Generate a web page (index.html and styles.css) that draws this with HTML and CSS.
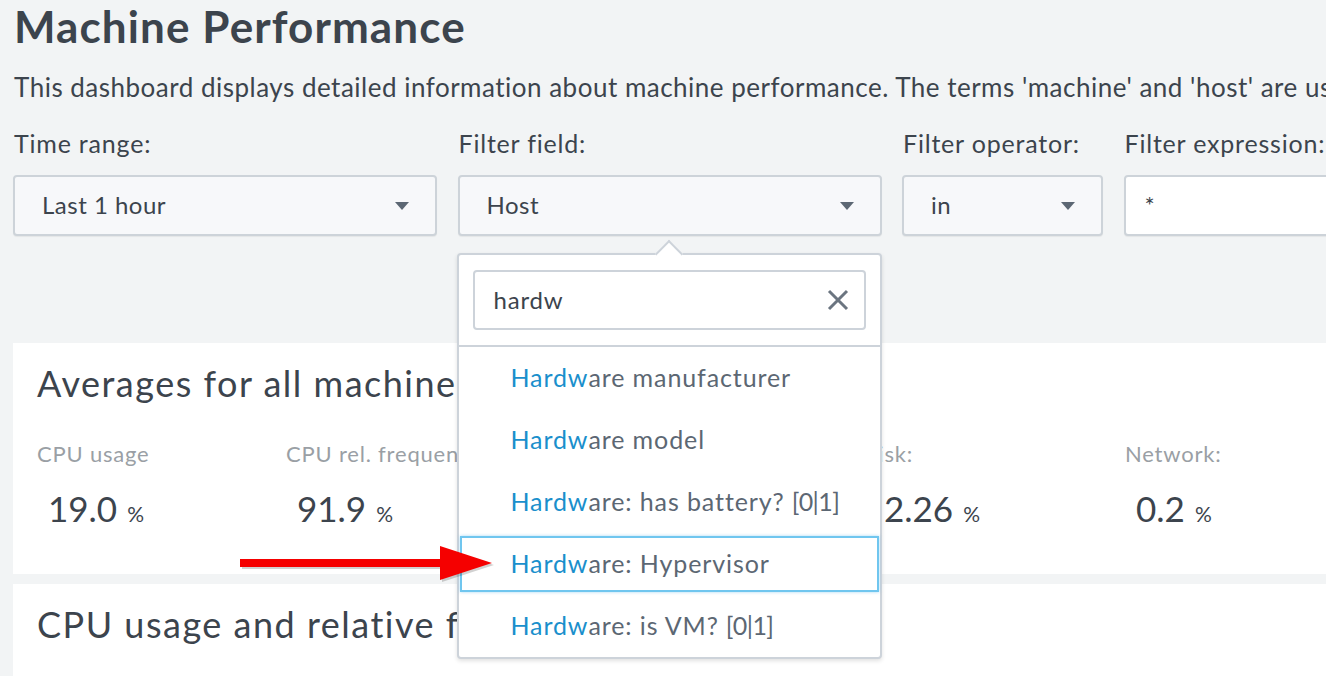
FILE: index.html
```html
<!doctype html>
<html>
<head>
<meta charset="utf-8">
<title>Machine Performance</title>
<link rel="stylesheet" href="styles.css">
</head>

<body>
<div class="page">
    <h1 class="dashTitle">Machine Performance</h1>
    <p class="dashDesc">This dashboard displays detailed information about machine performance. The terms 'machine' and 'host' are used interchangeably.</p>

    <div class="fieldset">
        <div class="field fieldWide">
            <label>Time range:</label>
            <div class="selectBox"><span>Last 1 hour</span><i class="caret"></i></div>
        </div>
        <div class="field fieldWide">
            <label>Filter field:</label>
            <div class="selectBox"><span>Host</span><i class="caret"></i></div>

            <div class="popover">
                <div class="searchWrap">
                    <div class="searchBox">
                        <span>hardw</span>
                        <svg class="clearIcon" width="22" height="22" viewBox="0 0 22 22">
                            <path d="M2 2 L20 20 M20 2 L2 20" stroke="#6b7580" stroke-width="3" stroke-linecap="butt" fill="none"/>
                        </svg>
                    </div>
                </div>
                <ul class="menu">
                    <li><em>Hardw</em>are manufacturer</li>
                    <li><em>Hardw</em>are model</li>
                    <li><em>Hardw</em>are: has battery? <b>[0|1]</b></li>
                    <li class="active"><em>Hardw</em>are: Hypervisor</li>
                    <li><em>Hardw</em>are: is VM? <b>[0|1]</b></li>
                </ul>
            </div>
        </div>
        <div class="field fieldNarrow">
            <label>Filter operator:</label>
            <div class="selectBox"><span>in</span><i class="caret"></i></div>
        </div>
        <div class="field fieldWide">
            <label>Filter expression:</label>
            <div class="textBox"><span>*</span></div>
        </div>
    </div>

    <div class="dashRow">
        <div class="panel">
            <h2 class="panelTitle">Averages for all machines</h2>
            <div class="singles">
                <div class="single">
                    <span class="singleLabel">CPU usage</span>
                    <div class="singleValue"><span class="num">19.0</span><span class="unit">%</span></div>
                </div>
                <div class="single">
                    <span class="singleLabel">CPU rel. frequency</span>
                    <div class="singleValue"><span class="num">91.9</span><span class="unit">%</span></div>
                </div>
                <div class="single">
                    <span class="singleLabel">Disk:</span>
                    <div class="singleValue shifted"><span class="num">2.26</span><span class="unit">%</span></div>
                </div>
                <div class="single">
                    <span class="singleLabel">Network:</span>
                    <div class="singleValue"><span class="num">0.2</span><span class="unit">%</span></div>
                </div>
            </div>
        </div>
    </div>

    <div class="dashRow">
        <div class="panel panelTall">
            <h2 class="panelTitle">CPU usage and relative frequency</h2>
        </div>
    </div>
</div>

<!-- annotation arrow over the screenshot -->
<svg class="callout" width="262" height="44" viewBox="236 542 262 44">
    <rect x="242" y="561" width="202" height="8" fill="rgba(0,0,0,0.18)"/>
    <polygon points="442,548 494,565 442,582" fill="rgba(0,0,0,0.18)"/>
    <rect x="240" y="559" width="202" height="8" fill="#f50000"/>
    <polygon points="440,546 492,563 440,580" fill="#f50000"/>
</svg>
</body>
</html>
```

FILE: styles.css
```css
*{ margin:0; padding:0; box-sizing:border-box}
ul{ list-style:none}
em{ font-style:normal}
html,body{ width:1326px; height:676px; overflow:hidden}
body{ background:#f2f4f5; color:#3c444d; font-family:"Lato","Liberation Sans",sans-serif; position:relative}

.page{ padding:0 0 0 13px}
.dashTitle{ font-size:44px; line-height:52px; font-weight:700; padding-left:1px; letter-spacing:1.1px}
.dashDesc{ font-size:26px; line-height:30px; margin-top:20px; padding-left:1px; white-space:nowrap; letter-spacing:0.5px}

.fieldset{ display:flex; gap:20.5px; margin-top:26px; width:2000px}
.field{ position:relative; flex-shrink:0}
.fieldWide{ width:424px}
.fieldNarrow{ width:201px}
.field label{ display:block; font-size:25px; line-height:30px; padding-left:1px; margin-bottom:17px; letter-spacing:0.8px}

.selectBox,.textBox{ height:61px; border:2px solid #cdd3d9; border-radius:4px; background:#f7f8fa; display:flex; align-items:center; padding:0 26px 3px 27px; font-size:24px; letter-spacing:0.5px; box-shadow:0 1px 1px rgba(0,0,0,0.06)}
.selectBox span{ flex:1}
.caret{ width:0; height:0; border-left:7px solid transparent; border-right:7px solid transparent; border-top:8px solid #5c6773; margin-top:3px}
.textBox{ background:#fff; padding-left:19px}

.popover{ position:absolute; left:-1px; top:calc(100% + 17px); width:425px; background:#fff; border:2px solid #cdd3da; border-radius:4px; box-shadow:0 2px 4px rgba(0,0,0,0.12); z-index:5}
.popover:before{ content:""; position:absolute; left:200px; top:-11px; width:18px; height:18px; background:#fff; border-top:2px solid #cdd3da; border-left:2px solid #cdd3da; transform:rotate(45deg)}
.searchWrap{ position:relative; padding:15px 14px; border-bottom:2px solid #cdd3da}
.searchBox{ height:60px; border:2px solid #cdd3da; border-radius:4px; display:flex; align-items:center; padding:0 15px 2px 19px; font-size:24px; letter-spacing:0.8px}
.searchBox span{ flex:1}
.clearIcon{ margin-top:2px}
.menu{ display:flex; flex-direction:column; gap:6px; padding:3px 1px}
.menu li{ height:56px; border:2px solid transparent; display:flex; align-items:center; padding:0 0 2px 49px; font-size:25px; color:#5c6773; letter-spacing:0.9px; white-space:nowrap}
.menu li em{ color:#1a8fcc}
.menu li b{ font-weight:400; letter-spacing:-0.6px; margin-left:7px}
.menu li.active{ border-color:#70c6ef; box-shadow:0 0 3px rgba(80,180,240,0.5)}

.dashRow{ margin-top:10px}
.fieldset + .dashRow{ margin-top:107px}
.panel{ background:#fff; padding:20px 0 45px 24px; height:231px}
.panelTall{ height:200px}
.panelTitle{ font-size:36px; line-height:40px; font-weight:400; white-space:nowrap; letter-spacing:1.5px}

.singles{ display:grid; grid-template-columns:249px 575px 264px 1fr; margin-top:37px}
.singleLabel{ display:block; font-size:22px; line-height:28px; color:#9a9fa5; white-space:nowrap; letter-spacing:0.8px}
.singleValue{ margin-top:19px; padding-left:11px; line-height:42px; white-space:nowrap}
.singleValue.shifted{ padding-left:23px}
.singleValue .num{ font-size:35px}
.singleValue .unit{ font-size:21px; margin-left:10px}

.callout{ position:absolute; left:236px; top:542px; z-index:10}
```
